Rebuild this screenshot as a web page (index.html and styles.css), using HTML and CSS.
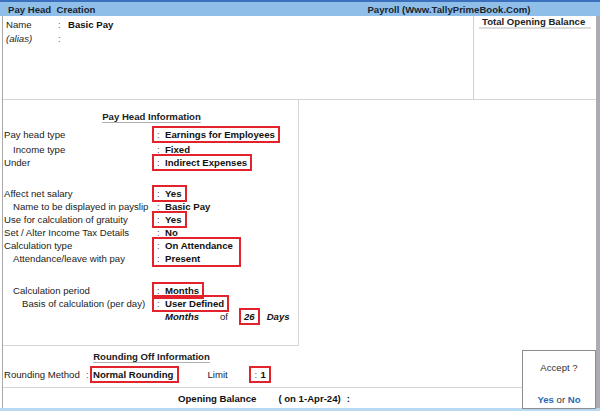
FILE: index.html
```html
<!DOCTYPE html>
<html lang="en">
<head>
    <meta charset="UTF-8">
    <title>Pay Head Creation</title>
    <link rel="stylesheet" href="styles.css">
</head>
<body>
    <div class="window">
        <div class="topline"></div>
        <div class="titlebar">
            <span class="title-left">Pay Head&nbsp; Creation</span>
            <span class="title-right">Payroll (Www.TallyPrimeBook.Com)</span>
        </div>

        <div class="main">
            <div class="content">
                <div class="head">
                    <div class="name-area">
                        <div class="name-row">
                            <span class="name-label">Name</span>
                            <span class="name-colon">:</span>
                            <span class="name-value">Basic Pay</span>
                        </div>
                        <div class="name-row">
                            <span class="name-label alias">(alias)</span>
                            <span class="name-colon">:</span>
                        </div>
                    </div>
                    <div class="total-box">
                        <div class="total-title">Total Opening Balance</div>
                    </div>
                </div>

                <div class="middle">
                    <div class="info">
                        <div class="section-title"><span>Pay Head Information</span></div>

                        <div class="fields block-one">
                            <span class="label">Pay head type</span>
                            <span class="val boxed"><span class="colon">:</span>Earnings for Employees</span>
                            <span class="label indent">Income type</span>
                            <span class="val"><span class="colon">:</span>Fixed</span>
                            <span class="label">Under</span>
                            <span class="val boxed"><span class="colon">:</span>Indirect Expenses</span>
                        </div>

                        <div class="fields block-two">
                            <span class="label">Affect net salary</span>
                            <span class="val boxed"><span class="colon">:</span>Yes</span>
                            <span class="label indent">Name to be displayed in payslip</span>
                            <span class="val"><span class="colon">:</span>Basic Pay</span>
                            <span class="label">Use for calculation of gratuity</span>
                            <span class="val boxed"><span class="colon">:</span>Yes</span>
                            <span class="label">Set / Alter Income Tax Details</span>
                            <span class="val"><span class="colon">:</span>No</span>
                            <span class="label">Calculation type</span>
                            <div class="val-group boxed">
                                <span class="val"><span class="colon">:</span>On Attendance</span>
                                <span class="val"><span class="colon">:</span>Present</span>
                            </div>
                            <span class="label indent">Attendance/leave with pay</span>
                        </div>

                        <div class="fields block-three">
                            <span class="label indent">Calculation period</span>
                            <span class="val boxed"><span class="colon">:</span>Months</span>
                            <span class="label indent-2">Basis of calculation (per day)</span>
                            <span class="val boxed"><span class="colon">:</span>User Defined</span>
                            <div class="months-row">
                                <span class="unit months">Months</span>
                                <span class="of">of</span>
                                <span class="days-box">26</span>
                                <span class="unit days">Days</span>
                            </div>
                        </div>
                    </div>
                    <div class="blank"></div>
                </div>

                <div class="rounding">
                    <div class="section-title"><span>Rounding Off Information</span></div>
                    <div class="rounding-row">
                        <span class="round-label">Rounding Method</span>
                        <span class="round-colon">:</span>
                        <span class="val boxed round-method">Normal Rounding</span>
                        <span class="limit-label">Limit</span>
                        <span class="val boxed limit-val"><span class="colon short">:</span>1</span>
                    </div>
                </div>

                <div class="footer">
                    <span>Opening Balance</span>
                    <span class="on-date">( on 1-Apr-24)</span>
                    <span class="footer-colon">:</span>
                </div>
            </div>
            <div class="scroll"></div>
        </div>

        <div class="bottomline"></div>

        <div class="accept">
            <div>Accept ?</div>
            <div><span class="choice">Yes</span> or <span class="choice">No</span></div>
        </div>
    </div>
</body>
</html>
```

FILE: styles.css
```css
* {
    margin: 0;
    padding: 0;
    box-sizing: border-box;
}
body {
    font-family: 'Liberation Sans', Arial, sans-serif;
    font-size: 9.6px;
    color: #222;
    background: #fff;
}
.window {
    position: relative;
    width: 600px;
    height: 411px;
    overflow: hidden;
    display: flex;
    flex-direction: column;
}
.topline {
    height: 2px;
    background-color: #3a70be;
}
.titlebar {
    height: 14px;
    background-color: #8fbfe8;
    display: flex;
    align-items: center;
    font-weight: bold;
    color: #1b2530;
}
.title-left {
    width: 300px;
    padding-left: 8px;
}
.title-right {
    width: 298px;
    text-align: center;
}
.main {
    flex: 1;
    display: flex;
    padding-left: 2px;
}
.content {
    flex: 1;
    display: flex;
    flex-direction: column;
    border-left: 1px solid #a8a8a8;
}
.scroll {
    width: 4px;
    background-color: #a9adb3;
}
.bottomline {
    height: 3px;
    background-color: #b8d9f2;
}

/* name header */
.head {
    height: 84px;
    display: flex;
    border-bottom: 1px solid #d6d6d6;
}
.name-area {
    flex: 1;
    padding: 2px 0 0 3px;
}
.name-row {
    display: flex;
    line-height: 14px;
}
.name-label {
    width: 52px;
}
.alias {
    font-style: italic;
}
.name-colon {
    width: 10px;
    color: #666;
}
.name-value {
    font-weight: bold;
    color: #111;
}
.total-box {
    width: 123px;
    border-left: 1px solid #cfcfcf;
}
.total-title {
    margin: 0 5px;
    padding-left: 3px;
    line-height: 11px;
    font-weight: bold;
    border-bottom: 2px solid #dcdcdc;
    color: #222;
}

/* pay head information */
.middle {
    height: 246px;
    display: flex;
}
.info {
    width: 296px;
    padding: 10px 0 0 1px;
    border-right: 1px solid #d6d6d6;
    border-bottom: 1px solid #d6d6d6;
}
.blank {
    flex: 1;
}
.section-title {
    width: 295px;
    text-align: center;
    line-height: 14px;
    font-weight: bold;
}
.section-title span {
    text-decoration: underline;
    text-decoration-color: #b0b0b0;
    text-underline-offset: 2px;
}
.fields {
    display: grid;
    grid-template-columns: 148px auto;
    grid-auto-rows: 13px;
    align-items: start;
    justify-items: start;
    line-height: 13px;
}
.block-one {
    margin-top: 4px;
    grid-template-rows: 15px 13px 13px;
}
.block-two {
    margin-top: 18px;
}
.block-three {
    margin-top: 19px;
}
.label.indent {
    padding-left: 9px;
}
.label.indent-2 {
    padding-left: 18px;
}
.val {
    display: inline-flex;
    border: 2px solid transparent;
    margin: -2px 0;
    padding: 0 3px;
    line-height: 13px;
    font-weight: bold;
    color: #111;
    white-space: nowrap;
}
.boxed {
    border: 2px solid #e3232c;
}
.colon {
    width: 8px;
    font-weight: normal;
    color: #555;
}
.colon.short {
    width: 6px;
}
.val-group {
    grid-row: span 2;
    display: flex;
    flex-direction: column;
    margin: -2px 0;
    padding-right: 3px;
}
.val-group .val {
    border: 0;
    margin: 0;
}
.months-row {
    grid-column: 2;
    display: flex;
    padding-left: 13px;
    line-height: 13px;
}
.unit {
    font-weight: bold;
    font-style: italic;
    color: #111;
}
.months {
    width: 55px;
}
.of {
    width: 19px;
}
.days-box {
    border: 2px solid #e3232c;
    margin: -2px 0;
    padding: 0 3px;
    font-weight: bold;
    font-style: italic;
    color: #111;
}
.days {
    margin-left: 7px;
}

/* rounding */
.rounding {
    height: 42px;
    padding: 4px 0 0 1px;
    border-bottom: 1px solid #d6d6d6;
}
.rounding .section-title {
    line-height: 13px;
}
.rounding-row {
    display: flex;
    margin-top: 5px;
    line-height: 13px;
}
.round-label {
    width: 82px;
}
.round-colon {
    width: 4px;
    color: #555;
}
.round-method {
    padding: 0 4px 0 1px;
}
.limit-label {
    width: 42px;
    margin-left: 28px;
}

/* footer */
.footer {
    height: 20px;
    display: flex;
    align-items: center;
    padding-left: 175px;
    font-weight: bold;
    color: #111;
}
.on-date {
    margin-left: 22px;
}
.footer-colon {
    margin-left: 6px;
}

/* accept dialog */
.accept {
    position: absolute;
    right: 4px;
    bottom: 2px;
    width: 74px;
    height: 59px;
    border: 1px solid #8c8c8c;
    background: #fff;
    display: flex;
    flex-direction: column;
    justify-content: space-between;
    align-items: center;
    padding: 10px 0 2px;
    line-height: 13px;
    color: #333;
}
.choice {
    color: #2b68b5;
    font-weight: bold;
}
```
